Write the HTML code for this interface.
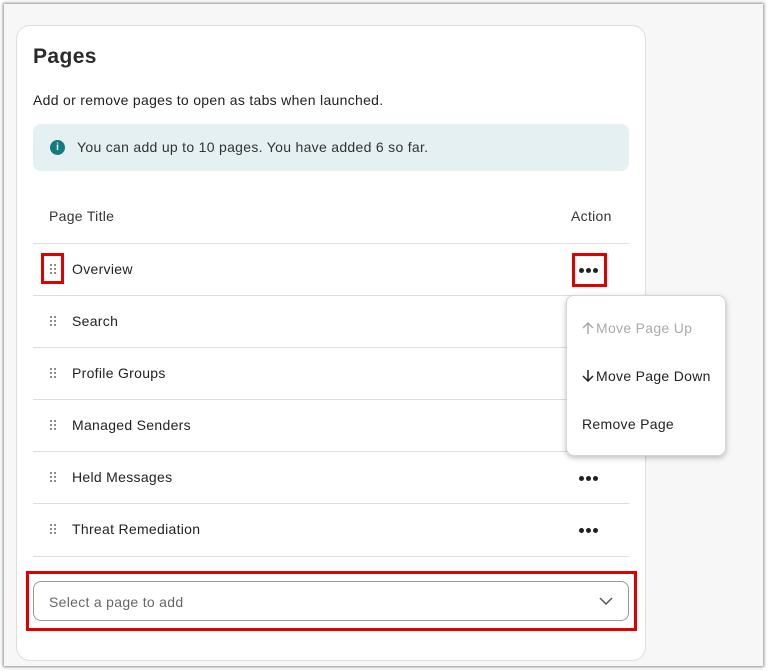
<!DOCTYPE html>
<html><head><style>
*{box-sizing:border-box;margin:0;padding:0}
body{width:768px;height:671px;background:#fff;font-family:"Liberation Sans",sans-serif;color:#222;position:relative;overflow:hidden;letter-spacing:.3px}
.win{position:absolute;left:4px;top:4px;width:759px;height:662px;background:#f7f7f7;box-shadow:0 0 3px 1px rgba(0,0,0,.45)}
.card{position:absolute;left:16px;top:25px;width:630px;height:636px;background:#fff;border:1px solid #ddd;border-radius:14px}
.abs{position:absolute}
h1{position:absolute;left:33px;top:45px;font-size:21px;font-weight:bold;color:#2a2a2a;letter-spacing:.4px}
.sub{left:33px;top:92px;font-size:14px}
.info{left:33px;top:124px;width:596px;height:47px;background:#e4f0f1;border-radius:8px}
.info .i{position:absolute;left:17px;top:16px;width:15px;height:15px;border-radius:50%;background:#137a7f;color:#fff;font-size:10px;font-weight:bold;text-align:center;line-height:15px;letter-spacing:0}
.info span.t{position:absolute;left:44px;top:15px;font-size:14px;color:#333}
.hd{top:208px;font-size:14px;color:#333}
.line{left:33px;width:596px;height:1px;background:#ddd}
.row{left:72px;font-size:14px;color:#222}
.grip{position:absolute;width:6px;height:12px}
.grip i{position:absolute;width:2px;height:2px;border-radius:1px;background:#666}
.dots{position:absolute;font-size:0}
.dots i{display:inline-block;width:5px;height:5px;border-radius:50%;background:#222;margin-right:2px}
.red{position:absolute;border:3px solid #e00000}
.menu{left:566px;top:295px;width:160px;height:161px;background:#fff;border:1px solid #d5d5d5;border-radius:8px;box-shadow:0 2px 6px rgba(0,0,0,.25)}
.menu div{position:absolute;left:15px;font-size:14px;white-space:nowrap}
.menu svg{vertical-align:-2px;margin-right:2px}
.sel{left:33px;top:581px;width:596px;height:40px;border:1px solid #999;border-radius:8px}
.sel span{position:absolute;left:15px;top:12px;font-size:14px;color:#666}
</style></head><body>
<div class="win"></div>
<div class="card"></div>
<h1>Pages</h1>
<div class="abs sub">Add or remove pages to open as tabs when launched.</div>
<div class="abs info"><div class="i">i</div><span class="t">You can add up to 10 pages. You have added 6 so far.</span></div>
<div class="abs hd" style="left:49px">Page Title</div>
<div class="abs hd" style="left:571px">Action</div>
<div class="abs line" style="top:243px"></div>
<div class="abs line" style="top:295px"></div>
<div class="abs line" style="top:347px"></div>
<div class="abs line" style="top:399px"></div>
<div class="abs line" style="top:451px"></div>
<div class="abs line" style="top:503px"></div>
<div class="abs line" style="top:556px"></div>

<div class="abs row" style="top:261px">Overview</div>
<div class="abs row" style="top:313px">Search</div>
<div class="abs row" style="top:365px">Profile Groups</div>
<div class="abs row" style="top:417px">Managed Senders</div>
<div class="abs row" style="top:469px">Held Messages</div>
<div class="abs row" style="top:521px">Threat Remediation</div>

<div class="grip" style="left:50px;top:264px"><i style="left:0;top:0"></i><i style="left:4px;top:0"></i><i style="left:0;top:4px"></i><i style="left:4px;top:4px"></i><i style="left:0;top:8px"></i><i style="left:4px;top:8px"></i></div>
<div class="grip" style="left:50px;top:316px"><i style="left:0;top:0"></i><i style="left:4px;top:0"></i><i style="left:0;top:4px"></i><i style="left:4px;top:4px"></i><i style="left:0;top:8px"></i><i style="left:4px;top:8px"></i></div>
<div class="grip" style="left:50px;top:368px"><i style="left:0;top:0"></i><i style="left:4px;top:0"></i><i style="left:0;top:4px"></i><i style="left:4px;top:4px"></i><i style="left:0;top:8px"></i><i style="left:4px;top:8px"></i></div>
<div class="grip" style="left:50px;top:420px"><i style="left:0;top:0"></i><i style="left:4px;top:0"></i><i style="left:0;top:4px"></i><i style="left:4px;top:4px"></i><i style="left:0;top:8px"></i><i style="left:4px;top:8px"></i></div>
<div class="grip" style="left:50px;top:472px"><i style="left:0;top:0"></i><i style="left:4px;top:0"></i><i style="left:0;top:4px"></i><i style="left:4px;top:4px"></i><i style="left:0;top:8px"></i><i style="left:4px;top:8px"></i></div>
<div class="grip" style="left:50px;top:524px"><i style="left:0;top:0"></i><i style="left:4px;top:0"></i><i style="left:0;top:4px"></i><i style="left:4px;top:4px"></i><i style="left:0;top:8px"></i><i style="left:4px;top:8px"></i></div>

<div class="dots" style="left:579px;top:268px"><i></i><i></i><i></i></div>
<div class="dots" style="left:579px;top:476px"><i></i><i></i><i></i></div>
<div class="dots" style="left:579px;top:528px"><i></i><i></i><i></i></div>

<div class="red" style="left:41px;top:253px;width:23px;height:31px"></div>
<div class="red" style="left:572px;top:253px;width:35px;height:34px"></div>

<div class="abs menu">
<div style="top:24px;color:#aaa"><svg width="12" height="14" viewBox="0 0 12 14"><path d="M6 13V2M1 7l5-5 5 5" fill="none" stroke="#aaa" stroke-width="1.5"/></svg>Move Page Up</div>
<div style="top:72px;color:#222"><svg width="12" height="14" viewBox="0 0 12 14"><path d="M6 1v11M1 7l5 5 5-5" fill="none" stroke="#222" stroke-width="1.5"/></svg>Move Page Down</div>
<div style="top:120px;color:#222">Remove Page</div>
</div>

<div class="red" style="left:26px;top:571px;width:611px;height:60px"></div>
<div class="abs sel"><span>Select a page to add</span>
<svg style="position:absolute;right:15px;top:14px" width="14" height="10" viewBox="0 0 14 10"><path d="M1 2l6 6 6-6" fill="none" stroke="#555" stroke-width="1.5"/></svg></div>
</body></html>
